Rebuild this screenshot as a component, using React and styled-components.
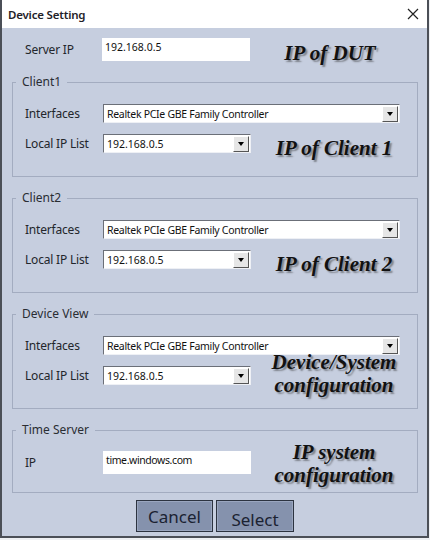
import React from 'react'
import styled, { createGlobalStyle } from 'styled-components'

const GlobalStyle = createGlobalStyle`
  body {
    margin: 0;
    background: #eef0f3;
  }
`

const Window = styled.div`
  width: 429px;
  height: 538px;
  box-sizing: border-box;
  border-left: 2px solid #4b4f57;
  border-right: 2px solid #4b4f57;
  border-bottom: 2px solid #4b4f57;
  background: #c6cedf;
  display: flex;
  flex-direction: column;
  font-family: "Noto Sans", "Noto Sans CJK KR", sans-serif;
  color: #1f2228;
`

const TitleBar = styled.div`
  height: 28px;
  flex-shrink: 0;
  background: #fff;
  display: flex;
  align-items: center;
  justify-content: space-between;
  padding: 0 8px 0 6px;
  font-size: 11.5px;
  font-weight: 600;
  letter-spacing: -0.2px;
`

const Body = styled.div`
  flex: 1;
  padding: 10px 9px 0 10px;
  display: flex;
  flex-direction: column;
`

const ServerRow = styled.div`
  display: grid;
  grid-template-columns: 77px 148px 1fr;
  grid-template-rows: 23px;
  padding-left: 13px;
  margin-bottom: 21px;
`

const Group = styled.div`
  border: 1px solid #a3acc0;
  padding: 0 17px ${p => p.$pb || 23}px 12px;
  margin-bottom: ${p => p.$mb ?? 21}px;
`

const Legend = styled.div`
  width: fit-content;
  margin: -9px 0 0 -9px;
  padding: 0 6px;
  background: #c6cedf;
  font-size: 12px;
  line-height: 16px;
  color: #2a2d33;
`

const Fields = styled.div`
  display: grid;
  grid-template-columns: 78px 148px 1fr;
  grid-auto-rows: ${p => p.$row || 19}px;
  row-gap: 11px;
  margin-top: ${p => p.$mt || 14}px;
`

const Label = styled.span`
  align-self: center;
  font-size: 12px;
  letter-spacing: -0.2px;
  color: #23262c;
  white-space: nowrap;
`

const TextBox = styled.div`
  background: #fff;
  font-size: 10.5px;
  letter-spacing: ${p => p.$ls ?? 0}px;
  line-height: 14px;
  padding: 2px 3px;
  color: #111;
  white-space: nowrap;
`

const Combo = styled.div`
  grid-column: ${p => (p.$wide ? '2 / 4' : '2')};
  box-sizing: border-box;
  height: 19px;
  background: #fff;
  border-top: 1px solid #6b6f78;
  border-left: 1px solid #6b6f78;
  border-bottom: 1px solid #eef0f5;
  border-right: 1px solid #eef0f5;
  display: flex;
  align-items: center;
  justify-content: space-between;
  padding-left: 3px;
  font-size: 10.5px;
  letter-spacing: ${p => (p.$wide ? -0.3 : 0)}px;
  color: #111;
  white-space: nowrap;
`

const DropButton = styled.span`
  box-sizing: border-box;
  width: 16px;
  height: 16px;
  margin-right: 1px;
  background: #e6e6e6;
  border-top: 1px solid #fff;
  border-left: 1px solid #fff;
  border-right: 1px solid #555;
  border-bottom: 1px solid #555;
  display: flex;
  align-items: center;
  justify-content: center;

  &::after {
    content: '';
    border-left: 3.5px solid transparent;
    border-right: 3.5px solid transparent;
    border-top: 4px solid #000;
  }
`

const Note = styled.div`
  grid-column: 3;
  align-self: start;
  margin-top: ${p => p.$mt || 0}px;
  margin-right: -17px;
  text-align: center;
  font-family: "Liberation Serif", "Times New Roman", serif;
  font-style: italic;
  font-weight: bold;
  font-size: 21px;
  line-height: 23px;
  color: #111;
  text-shadow: 2px 2px 1.5px rgba(40, 40, 40, 0.45);
  white-space: nowrap;
`

const ServerNote = styled(Note)`
  margin-right: 8px;
`

const ButtonRow = styled.div`
  display: flex;
  justify-content: center;
  gap: 3px;
`

const Button = styled.button`
  width: ${p => p.$w || 77}px;
  height: 32px;
  padding: ${p => p.$pt || 0}px 0 0;
  background: #8592ad;
  border: 1px solid #2c3340;
  box-shadow: inset 0 0 0 1px #9aa6bf;
  font-family: "Noto Sans", sans-serif;
  font-size: 17px;
  color: #1b2232;
`

const CloseIcon = () => (
  <svg width="12" height="12" viewBox="0 0 12 12">
    <path d="M1 1 L11 11 M11 1 L1 11" stroke="#222" strokeWidth="1.2" />
  </svg>
)

const IpCombo = () => (
  <Combo>
    192.168.0.5
    <DropButton />
  </Combo>
)

const NicCombo = () => (
  <Combo $wide>
    Realtek PCIe GBE Family Controller
    <DropButton />
  </Combo>
)

const App = () => {
  return (
    <>
      <GlobalStyle />
      <Window>
        <TitleBar>
          <span>Device Setting</span>
          <CloseIcon />
        </TitleBar>
        <Body>
          <ServerRow>
            <Label>Server IP</Label>
            <TextBox>192.168.0.5</TextBox>
            <ServerNote $mt={4}>IP of DUT</ServerNote>
          </ServerRow>

          <Group>
            <Legend>Client1</Legend>
            <Fields>
              <Label>Interfaces</Label>
              <NicCombo />
              <Label>Local IP List</Label>
              <IpCombo />
              <Note $mt={3}>IP of Client 1</Note>
            </Fields>
          </Group>

          <Group>
            <Legend>Client2</Legend>
            <Fields>
              <Label>Interfaces</Label>
              <NicCombo />
              <Label>Local IP List</Label>
              <IpCombo />
              <Note $mt={3}>IP of Client 2</Note>
            </Fields>
          </Group>

          <Group>
            <Legend>Device View</Legend>
            <Fields>
              <Label>Interfaces</Label>
              <NicCombo />
              <Label>Local IP List</Label>
              <IpCombo />
              <Note $mt={-15}>
                Device/System
                <br />
                configuration
              </Note>
            </Fields>
          </Group>

          <Group $pb={18} $mb={7}>
            <Legend>Time Server</Legend>
            <Fields $row={23} $mt={13}>
              <Label>IP</Label>
              <TextBox $ls={-0.4}>time.windows.com</TextBox>
              <Note $mt={-10}>
                IP system
                <br />
                configuration
              </Note>
            </Fields>
          </Group>

          <ButtonRow>
            <Button>Cancel</Button>
            <Button $w={78} $pt={6}>Select</Button>
          </ButtonRow>
        </Body>
      </Window>
    </>
  )
}

export default App
